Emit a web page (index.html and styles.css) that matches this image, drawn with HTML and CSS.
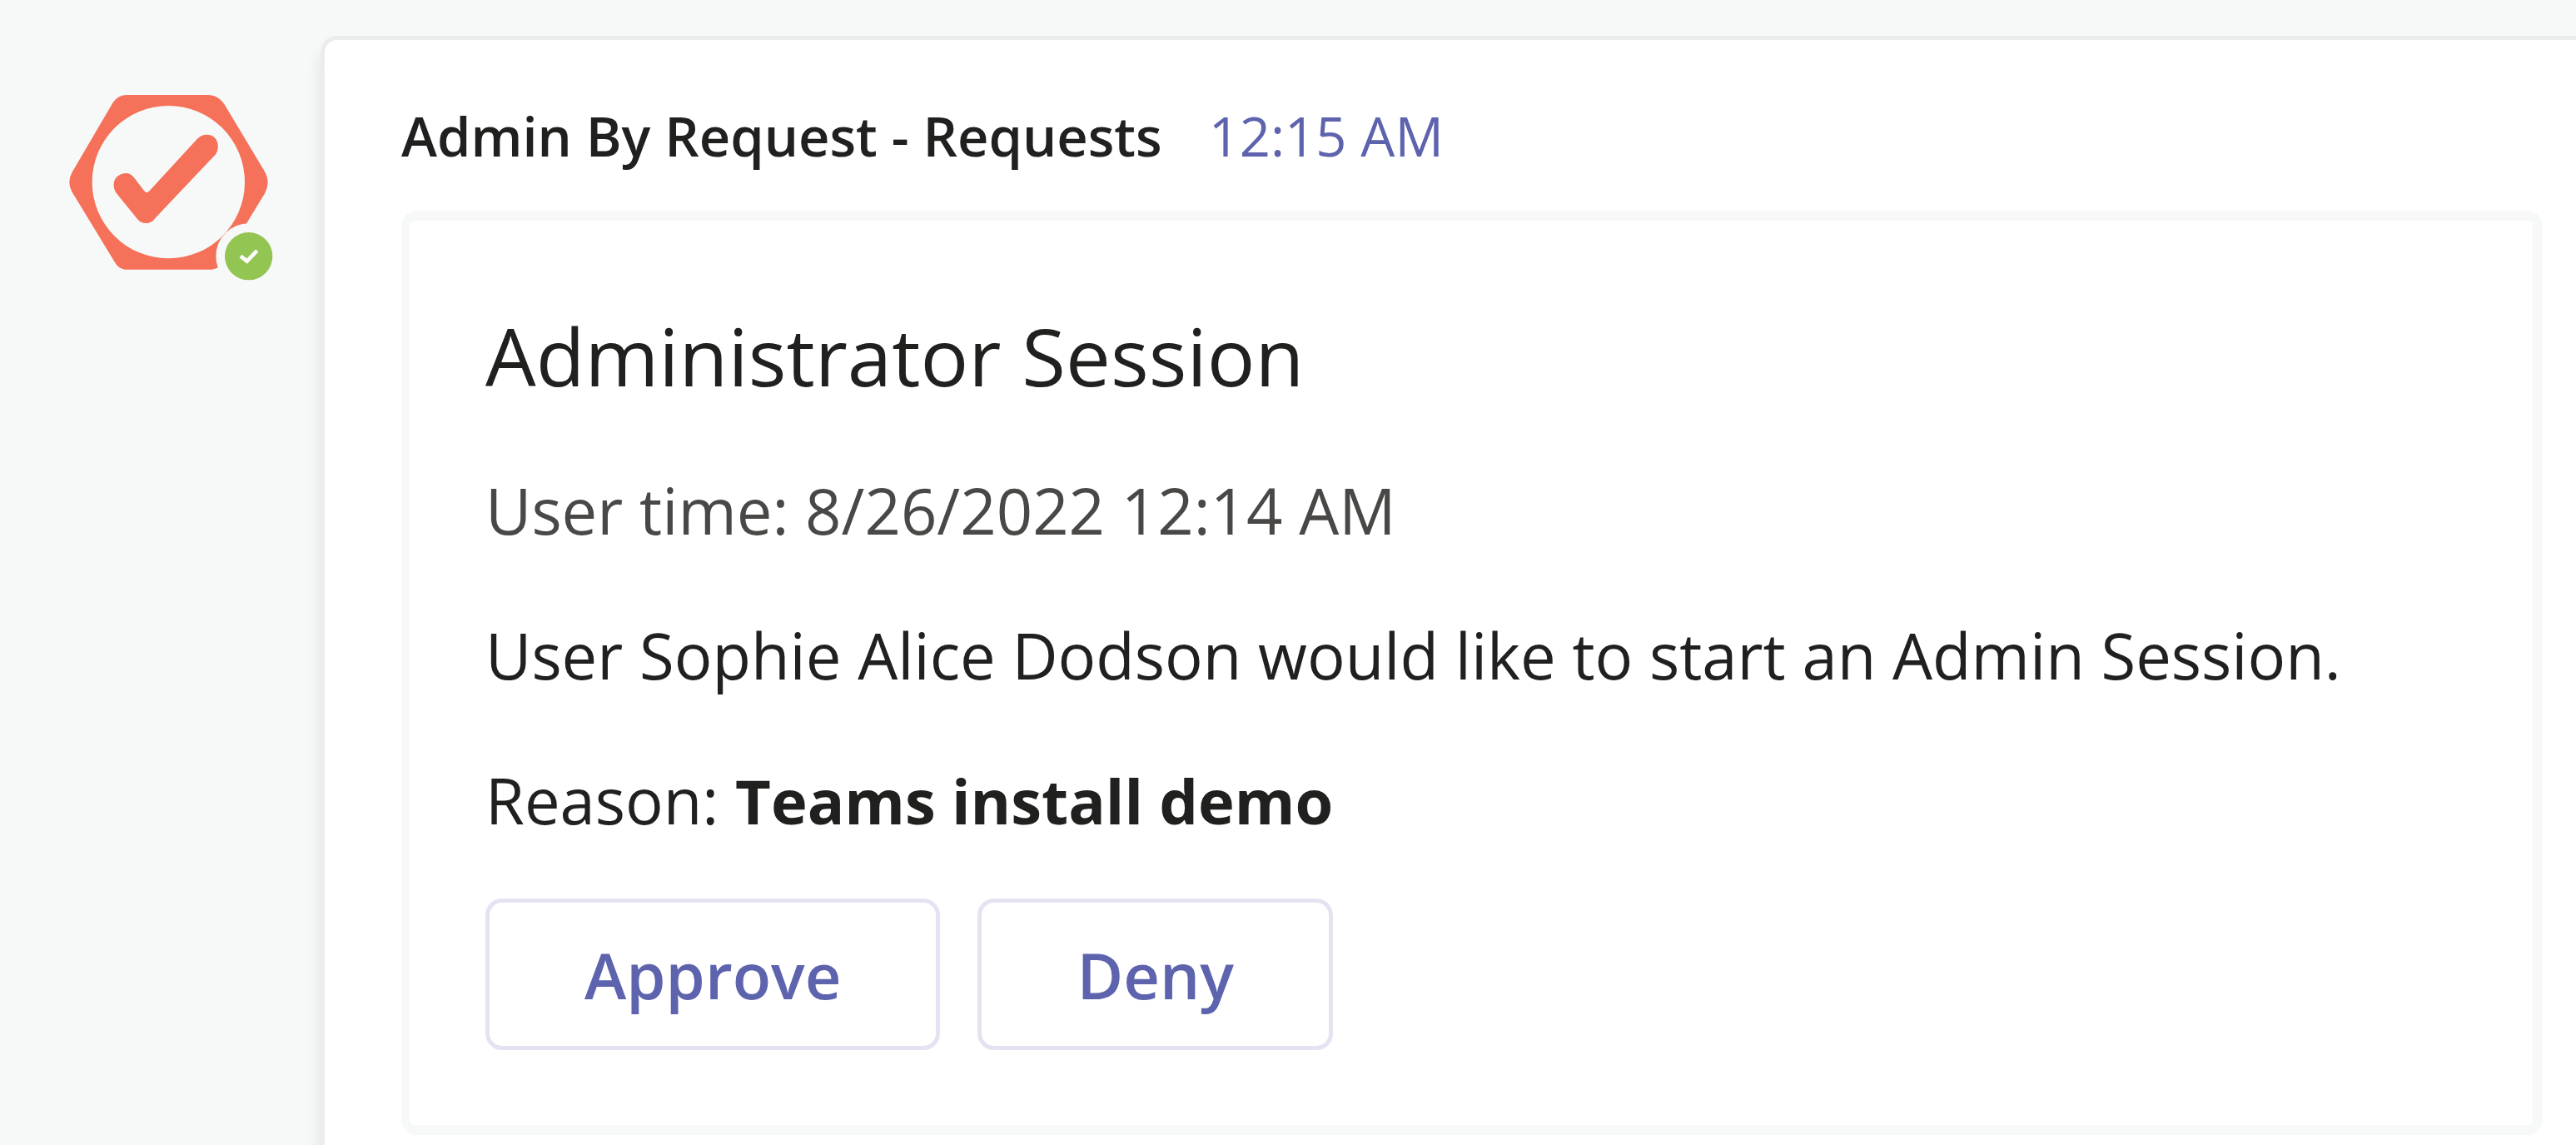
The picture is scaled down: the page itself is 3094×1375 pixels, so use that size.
FILE: index.html
```html
<!DOCTYPE html>
<html lang="en">
<head>
<meta charset="utf-8">
<title>Admin By Request - Requests</title>
<link rel="stylesheet" href="styles.css">
</head>
<body>
<main class="message">
  <svg class="avatar" viewBox="69 72 735 669" role="img" aria-label="Admin By Request, available">
    <path class="avatar-brand" d="M275 72H570Q608 74 628 105L772 345Q796 385 775 425L625 672Q610 700 580 701H270Q245 697 232 672L80 422Q60 386 80 350L225 103Q243 73 275 72Z"/>
    <circle class="avatar-cutout" cx="427" cy="386" r="275"/>
    <path class="avatar-brand" d="M303 370L339 417Q348 430 359 417L528 233C546 213 565 213 578 217C605 226 613 258 598 285L380 515C363 540 331 540 315 519L240 427C222 402 227 366 260 356C278 351 292 356 303 370Z"/>
    <circle class="avatar-cutout" cx="716" cy="653" r="118"/>
    <circle class="status" cx="716" cy="653" r="86"/>
    <path class="status-check" d="M687 653L710 671L746 633"/>
  </svg>
  <article class="bubble">
    <header class="message-header">
      <span class="sender">Admin By Request - Requests</span>
      <time class="sent-time">12:15 AM</time>
    </header>
    <section class="card">
      <h1 class="card-title">Administrator Session</h1>
      <p class="card-text card-text-subtle">User time: 8/26/2022 12:14 AM</p>
      <p class="card-text">User Sophie Alice Dodson would like to start an Admin Session.</p>
      <p class="card-text">Reason: <strong class="reason">Teams install demo</strong></p>
      <div class="actions">
        <button class="action" type="button">Approve</button>
        <button class="action" type="button">Deny</button>
      </div>
    </section>
  </article>
</main>
</body>
</html>
```
FILE: styles.css
```css
* {
  box-sizing: border-box;
}

body {
  margin: 0;
  background: #f7f9f8;
  color: #20201f;
  font-family: "Open Sans", "Noto Sans", sans-serif;
}

.message {
  display: flex;
  align-items: stretch;
  gap: 57px;
  min-height: 100vh;
  padding: 43px 0 0 83px;
  overflow: hidden;
}

.avatar {
  flex: none;
  width: 245px;
  height: 223px;
  margin-top: 71px;
}

.avatar-brand {
  fill: #f57159;
}

.avatar-cutout {
  fill: #f7f9f8;
}

.status {
  fill: #93c553;
}

.status-check {
  fill: none;
  stroke: #fff;
  stroke-width: 14;
}

.bubble {
  flex: 1;
  min-width: 0;
  padding: 70px 40px 12px 92px;
  border: solid #ebecee;
  border-width: 5px 0 0 5px;
  border-radius: 20px 0 0 0;
  background: #fff;
  box-shadow: 0 16px 18px rgba(30, 30, 60, 0.1);
}

.message-header {
  display: flex;
  align-items: baseline;
  gap: 56px;
  margin-bottom: 45px;
  font-size: 65px;
  line-height: 90px;
}

.sender {
  font-weight: 600;
}

.sent-time {
  color: #5e63ae;
}

.card {
  padding: 98px 91px 90px;
  border: 12px solid #f7f9f8;
  border-left-width: 10px;
  border-radius: 18px;
}

.card-title {
  margin: 0 0 70px;
  font-size: 96px;
  font-weight: 400;
  line-height: 128px;
}

.card-text {
  margin: 0 0 70px;
  font-size: 76px;
  line-height: 104px;
}

.card-text-subtle {
  color: #4a4846;
}

.card-text:last-of-type {
  margin-bottom: 65px;
}

.reason {
  font-size: 74px;
  font-weight: 700;
}

.actions {
  display: flex;
  flex-wrap: wrap;
  gap: 45px;
}

.action {
  padding: 35px 114px 33px;
  border: 5px solid #e4e3f2;
  border-radius: 20px;
  background: #fff;
  color: #5e63ae;
  font-family: inherit;
  font-size: 76px;
  font-weight: 600;
  line-height: 104px;
}
```
